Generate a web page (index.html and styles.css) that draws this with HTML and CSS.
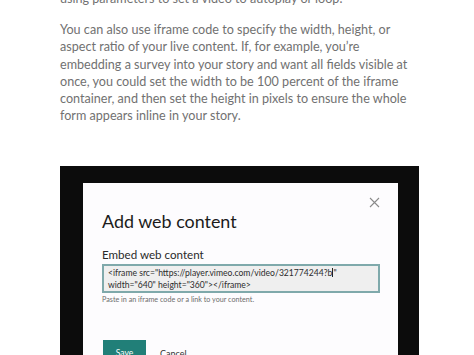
FILE: index.html
```html
<!DOCTYPE html>
<html>
<head>
<meta charset="utf-8">
<link rel="stylesheet" href="styles.css">
</head>
<body>
<div class="page">
  <p class="para first">using parameters to set a video to autoplay or loop.</p>
  <p class="para">You can also use iframe code to specify the width, height, or aspect ratio of your live content. If, for example, you’re embedding a survey into your story and want all fields visible at once, you could set the width to be 100 percent of the iframe container, and then set the height in pixels to ensure the whole form appears inline in your story.</p>
  <div class="shot">
    <div class="modal">
      <div class="close-row">
        <svg class="close" width="11" height="11" viewBox="0 0 11 11"><path d="M1 1L10 10M10 1L1 10" stroke="#8a8a8a" stroke-width="1.1" fill="none"/></svg>
      </div>
      <h2 class="title">Add web content</h2>
      <div class="label">Embed web content</div>
      <div class="input">&lt;iframe src="https://player.vimeo.com/video/321774244?b<span class="caret"></span>"<br>width="640" height="360"&gt;&lt;/iframe&gt;</div>
      <div class="hint">Paste in an iframe code or a link to your content.</div>
      <div class="actions">
        <div class="save">Save</div>
        <div class="cancel">Cancel</div>
      </div>
    </div>
  </div>
</div>
</body>
</html>
```
FILE: styles.css
```css
html, body { margin: 0; padding: 0; background: #fff; overflow: hidden; }
body { width: 474px; height: 355px; font-family: Lato, "Noto Sans", sans-serif; }
.page { padding-left: 60px; margin-top: -10px; }
.para { margin: 0; width: 355px; font-size: 12.6px; line-height: 17.2px; color: #717171; }
.first { margin-bottom: 14px; }
.shot { margin-top: 42px; width: 359px; height: 200px; background: #0c0c0c; padding: 17px 21px 0 23px; box-sizing: border-box; }
.modal { background: #fdfcfe; height: 100%; padding: 0 18px 0 19px; box-sizing: border-box; }
.close-row { display: flex; justify-content: flex-end; padding-top: 13.5px; height: 11px; }
.close { display: block; }
.title { margin: 2.5px 0 0 0; font-weight: 400; font-size: 17.9px; line-height: 22px; color: #1b1b1b; }
.label { margin-top: 14.5px; font-size: 11.6px; line-height: 15px; color: #2a2a2a; }
.input { margin-top: 2.5px; border: 2px solid #7fa9ab; background: #efefef; font-size: 8.6px; line-height: 12px; color: #2c2c2c; padding: 1px 4px 0 4px; height: 24px; }
.caret { display: inline-block; width: 1px; height: 9px; background: #222; vertical-align: -1px; }
.hint { margin-top: 1.5px; font-size: 7.2px; color: #6d6d6d; line-height: 9px; }
.actions { display: flex; align-items: flex-start; margin-top: 36.5px; gap: 14px; padding-left: 1px; }
.save { background: #217f78; color: #fff; font-size: 8.5px; width: 43px; height: 24px; display: flex; justify-content: center; padding-top: 8px; box-sizing: border-box; }
.cancel { font-size: 9px; color: #333; padding-top: 8px; }
```
